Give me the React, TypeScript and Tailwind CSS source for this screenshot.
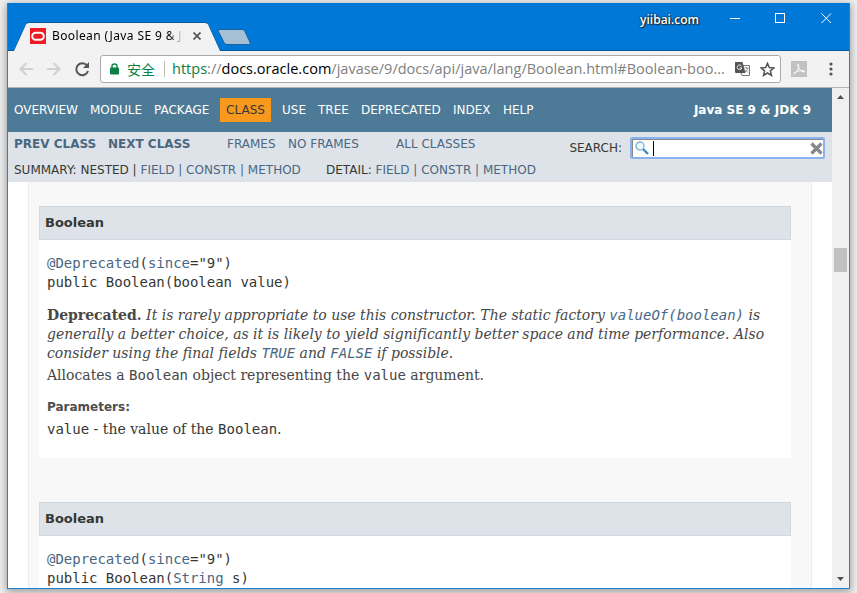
import React from 'react';

interface ConstructorBlockProps {
  param: React.ReactNode;
  children?: React.ReactNode;
}

const ConstructorBlock: React.FC<ConstructorBlockProps> = ({ param, children }) => (
  <section className="bg-white">
    <h4 className="h-[34px] border border-[#d0d9e0] bg-[#dee3e9] pl-[5px] text-[13px] leading-[31px] font-bold">Boolean</h4>
    <div className="px-2 pt-[14px]">
      <pre className="font-['DejaVu_Sans_Mono',monospace] text-[14px] leading-[19px] tracking-[-0.02px]">
        <Ref>@Deprecated</Ref>(<Ref>since</Ref>="9"){'\n'}public Boolean({param})
      </pre>
      {children}
    </div>
  </section>
);

const Ref: React.FC<{ children: React.ReactNode }> = ({ children }) => (
  <a className="text-[#4a6782]">{children}</a>
);

const Code: React.FC<{ children: React.ReactNode }> = ({ children }) => (
  <code className="font-['DejaVu_Sans_Mono',monospace] text-[14px]">{children}</code>
);

const TitleBar = () => (
  <div className="relative flex h-[48px] shrink-0 items-start justify-end bg-[#0078d7] text-white">
    <svg className="absolute left-0 top-0" width="841" height="48" viewBox="0 0 841 48">
      <path d="M0 47.5H6L18 21.5Q19 19.5 21 19.5H197Q199 19.5 200 21.5L212 47.5H841" fill="none" stroke="#075a9c" />
      <path d="M6 48L18 21.5Q19 20 21 20H197Q199 20 200 21.5L212 48Z" fill="#f2f2f2" />
      <path d="M211 26.5H234Q236 26.5 237 28.5L242 39.5Q243 41.5 240.500 41.500H219Q217 41.500 216 39.500L210.500 28.500Q210 26.500 211 26.500Z" fill="#a5bfd4" stroke="#17629f" />
    </svg>
    <div className="absolute left-[22px] top-[25px] flex items-center">
      <svg width="16" height="16" viewBox="0 0 16 16">
        <rect width="16" height="16" fill="#ed1c24" />
        <rect x="2.200" y="4.700" width="11.600" height="7" rx="3.500" fill="none" stroke="#fff" strokeWidth="2" />
      </svg>
      <span className="ml-[6px] w-[132px] bg-linear-to-r from-black from-88% to-transparent bg-clip-text font-['Noto_Sans',sans-serif] text-[12px] leading-4 tracking-[0.38px] whitespace-nowrap text-transparent">
        Boolean (Java SE 9 &amp; JD
      </span>
      <svg className="ml-[9px]" width="8" height="8" viewBox="0 0 8 8" stroke="#555" strokeWidth="1.700">
        <path d="M.500 .500L7.500 7.500M7.500 .500L.500 7.500" />
      </svg>
    </div>
    <span className="mt-[9px] mr-[31px] font-['Open_Sans',sans-serif] text-[12px] leading-4 font-semibold [text-shadow:0_0_2px_#000,1px_1px_1px_#333]">yiibai.com</span>
    <svg className="mt-[9px] mr-[17px]" width="102" height="12" viewBox="0 0 102 12" fill="none" stroke="#fff">
      <path d="M0 6.500H10M91.500 1.500L101 11M101 1.500L91.500 11" />
      <rect x="45.500" y="1.500" width="9" height="9" />
    </svg>
  </div>
);

const Toolbar = () => (
  <div className="flex h-[37px] shrink-0 items-center border-b border-[#b4b4b4] bg-[#f2f2f2] font-['Open_Sans',sans-serif]">
    <svg className="ml-[11px]" width="71" height="16" viewBox="0 0 71 16" fill="none" strokeWidth="2">
      <path d="M14 8H1.500M7.500 2L1.500 8L7.500 14" stroke="#d0d0d0" />
      <path d="M28 8H40.500M34.500 2L40.500 8L34.500 14" stroke="#d0d0d0" />
      <path d="M68 4.500A6 6 0 1 0 69 10" stroke="#555" />
      <path d="M70 1V7H64Z" fill="#555" />
    </svg>
    <div className="ml-[10px] flex h-7 w-[681px] items-center rounded-[3px] border border-[#aaa] bg-white">
      <svg className="ml-[9px]" width="9" height="12" viewBox="0 0 9 12">
        <rect y="4.500" width="9" height="7" rx="1" fill="#0b8043" />
        <path d="M2 5V3Q2 1 4.500 1T7 3V5" fill="none" stroke="#0b8043" strokeWidth="1.400" />
      </svg>
      <span className="ml-2 font-['Noto_Sans_CJK_SC',sans-serif] text-[14px] leading-5 text-[#0b8043]">安全</span>
      <span className="ml-[9px] h-4 w-px bg-[#bbb]" />
      <span className="ml-[7px] w-[561px] text-[14.5px] leading-5 tracking-[0.01px] whitespace-nowrap text-[#808080]">
        <span className="text-[#0b8043]">https</span>://<span className="text-black">docs.oracle.com</span>/javase/9/docs/api/java/lang/Boolean.html#Boolean-boo...
      </span>
      <svg className="ml-[2px] shrink-0" width="15" height="14" viewBox="0 0 15 14">
        <path d="M6 3.500H14.500V13.500H7L6 11Z" fill="#fff" stroke="#777" />
        <path d="M0 0H7.500L10.500 11H1Q0 11 0 10Z" fill="#555" />
        <path d="M6.500 4A2.300 2.300 0 1 0 6.800 6H4.700" fill="none" stroke="#fff" />
        <path d="M9.500 6H13.500M11.500 5V6M13 6Q12 9 10 10M10.500 8L13 10.500" fill="none" stroke="#777" strokeWidth=".8" />
      </svg>
      <svg className="ml-[10px] shrink-0" width="15" height="15" viewBox="0 0 15 15">
        <path d="M7.500 1.300L9.300 5.500L14 5.900L10.400 8.900L11.500 13.500L7.500 11L3.500 13.500L4.600 8.900L1 5.900L5.700 5.500Z" fill="none" stroke="#555" strokeWidth="1.500" />
      </svg>
    </div>
    <svg className="ml-[10px]" width="16" height="16" viewBox="0 0 16 16">
      <rect width="16" height="16" fill="#c1c1c1" />
      <path d="M2.500 13C5 12 9 7 7.500 3.500C7 2 6 4 8 7.500C9.500 10 12 11.500 13.500 10.500C14 9 9 9 4 11.500Z" fill="none" stroke="#f3f3f3" strokeWidth="1.100" />
    </svg>
    <svg className="ml-[22px]" width="4" height="14" viewBox="0 0 4 14" fill="#555">
      <circle cx="2" cy="2" r="1.600" />
      <circle cx="2" cy="7" r="1.600" />
      <circle cx="2" cy="12" r="1.600" />
    </svg>
  </div>
);

const TopNav = () => (
  <nav className="flex h-[44px] items-center bg-[#4d7a97] pl-[6px] text-[12px] leading-[14px] text-white">
    <a className="w-[76px] shrink-0">OVERVIEW</a>
    <a className="w-[64px] shrink-0">MODULE</a>
    <a className="w-[66px] shrink-0">PACKAGE</a>
    <a className="h-6 w-[51px] shrink-0 bg-[#f8981d] pt-[5px] text-center text-[#353833]">CLASS</a>
    <a className="ml-[11px] w-[36px] shrink-0">USE</a>
    <a className="w-[43px] shrink-0">TREE</a>
    <a className="w-[92px] shrink-0">DEPRECATED</a>
    <a className="w-[50px] shrink-0">INDEX</a>
    <a>HELP</a>
    <strong className="mr-[21px] ml-auto">Java SE 9 &amp; JDK 9</strong>
  </nav>
);

const SubNav = () => (
  <div className="flex h-[50px] justify-between bg-[#dee3e9] pr-[7px] pl-[6px] text-[12px] leading-[14px] text-[#4a6782]">
    <div className="pt-[5px] whitespace-nowrap">
      <div className="flex">
        <strong className="w-[94px]">PREV CLASS</strong>
        <strong className="w-[119px]">NEXT CLASS</strong>
        <span className="w-[61px]">FRAMES</span>
        <span className="w-[108px]">NO FRAMES</span>
        <span>ALL CLASSES</span>
      </div>
      <div className="mt-3 flex">
        <span className="w-[312px]"><span className="text-[#353833]">SUMMARY: NESTED |</span> FIELD | CONSTR | METHOD</span>
        <span><span className="text-[#353833]">DETAIL:</span> FIELD | CONSTR | METHOD</span>
      </div>
    </div>
    <div className="mt-[5px] flex h-[22px] items-center">
      <span className="mr-[8px] text-[#353833]">SEARCH:</span>
      <div className="flex h-[22px] w-[195px] items-center rounded-[2px] border-2 border-[#8ab2f0] bg-white shadow-[inset_1px_1px_0_#888]">
        <svg className="ml-[3px]" width="14" height="14" viewBox="0 0 14 14" fill="none">
          <circle cx="5" cy="5" r="4" stroke="#7bb4d4" strokeWidth="1.300" fill="#f2fafc" />
          <path d="M8 8L13 13" stroke="#3a8fc4" strokeWidth="2.400" />
        </svg>
        <span className="ml-[4px] h-[15px] w-px bg-black" />
        <svg className="mr-0 ml-auto" width="13" height="13" viewBox="0 0 13 13" stroke="#85898e" strokeWidth="3.200">
          <path d="M1.500 1.500L11.500 11.500M11.500 1.500L1.500 11.500" />
        </svg>
      </div>
    </div>
  </div>
);

const App: React.FC = () => {
  return (
    <div className="h-[593px] w-[857px] overflow-hidden bg-[#f0f0f0] pt-[3px] pl-[7px]">
      <div className="flex h-[586px] w-[843px] flex-col border border-t-0 border-[#1883d7] shadow-[0_2px_8px_1px_rgba(0,0,0,0.35)]">
        <TitleBar />
        <Toolbar />
        <div className="flex min-h-0 flex-1 overflow-hidden bg-white">
          <main className="flex w-[824px] shrink-0 flex-col overflow-hidden font-['DejaVu_Sans',sans-serif] text-[#353833]">
            <TopNav />
            <SubNav />
            <div className="mr-5 ml-5 h-[406px] shrink-0 overflow-hidden border-x border-[#ededed] bg-[#f8f8f8] pt-6 pr-5 pl-[10px]">
              <div className="h-[252px] bg-white">
                <ConstructorBlock param="boolean value">
                  <div className="mt-[14px] font-['DejaVu_Serif',serif] text-[14px] text-[#474747]">
                    <p className="leading-[19px] tracking-[-0.01px] whitespace-nowrap">
                      <b>Deprecated.</b> <i>It is rarely appropriate to use this constructor. The static factory <Ref><Code>valueOf(boolean)</Code></Ref> is<br />
                      generally a better choice, as it is likely to yield significantly better space and time performance. Also<br />
                      consider using the final fields <Ref><Code>TRUE</Code></Ref> and <Ref><Code>FALSE</Code></Ref> if possible.</i>
                    </p>
                    <p className="mt-[3px] leading-[19px]">
                      Allocates a <Code>Boolean</Code> object representing the <Code>value</Code> argument.
                    </p>
                  </div>
                  <dl className="mt-[15px] leading-[14px]">
                    <dt className="text-[12px] font-bold text-[#4e4e4e]">Parameters:</dt>
                    <dd className="mt-[6px] font-['DejaVu_Serif',serif] text-[14px] leading-[19px]">
                      <Code>value</Code> - the value of the <Code>Boolean</Code>.
                    </dd>
                  </dl>
                </ConstructorBlock>
              </div>
              <div className="mt-[44px]">
                <ConstructorBlock param={<><Ref>String</Ref> s</>}>
                  <div className="h-10" />
                </ConstructorBlock>
              </div>
            </div>
          </main>
          <div className="flex w-[17px] shrink-0 flex-col items-center bg-[#f0f0f0]">
            <svg className="mt-[7px]" width="7" height="4" viewBox="0 0 7 4" fill="#505050"><path d="M0 4L3.500 0L7 4Z" /></svg>
            <div className="mt-[149px] h-6 w-[13px] bg-[#c1c1c1]" />
            <svg className="mt-auto mb-[7px]" width="7" height="4" viewBox="0 0 7 4" fill="#505050"><path d="M0 0L3.500 4L7 0Z" /></svg>
          </div>
        </div>
      </div>
    </div>
  );
};

export default App;
